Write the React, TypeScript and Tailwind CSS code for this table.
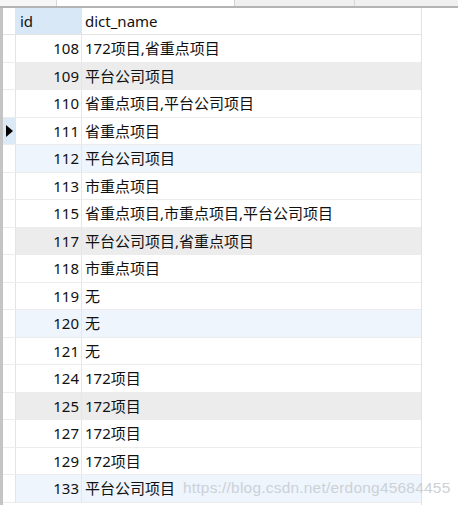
import React from "react";

type Row = { id: number; name: string; bg: "w" | "g" | "b"; current?: boolean };

const rows: Row[] = [
  { id: 108, name: "172项目,省重点项目", bg: "w" },
  { id: 109, name: "平台公司项目", bg: "g" },
  { id: 110, name: "省重点项目,平台公司项目", bg: "w" },
  { id: 111, name: "省重点项目", bg: "w", current: true },
  { id: 112, name: "平台公司项目", bg: "b" },
  { id: 113, name: "市重点项目", bg: "w" },
  { id: 115, name: "省重点项目,市重点项目,平台公司项目", bg: "w" },
  { id: 117, name: "平台公司项目,省重点项目", bg: "g" },
  { id: 118, name: "市重点项目", bg: "w" },
  { id: 119, name: "无", bg: "w" },
  { id: 120, name: "无", bg: "b" },
  { id: 121, name: "无", bg: "w" },
  { id: 124, name: "172项目", bg: "w" },
  { id: 125, name: "172项目", bg: "g" },
  { id: 127, name: "172项目", bg: "w" },
  { id: 129, name: "172项目", bg: "w" },
  { id: 133, name: "平台公司项目", bg: "b" },
];

const rowBg = {
  w: "bg-white",
  g: "bg-[#ececec]",
  b: "bg-[#eef5fd]",
};

export default function App() {
  return (
    <div className="relative w-[458px] h-[505px] overflow-hidden bg-white text-[#111] text-[15px] font-['Segoe_UI','Noto_Sans','Noto_Sans_CJK_SC',sans-serif]">
      {/* tab strip */}
      <div className="flex h-[8px] bg-[#f0f0f0] border-b-2 border-[#b4b4b4]">
        <div className="w-[57px] bg-[#f7f7f7] border-r border-[#d8d8d8]" />
        <div className="w-[178px] bg-white border-r border-[#d0d0d0]" />
        <div className="w-[120px] border-r border-[#d8d8d8]" />
        <div className="flex-1" />
      </div>

      <div className="flex">
        <div className="w-[3px] bg-[#c4c4c4] h-[500px]" />
        <div className="w-[419px] border-r border-[#e2e2e2]">
          {/* header */}
          <div className="flex h-[27px] border-b border-[#e4e4e4]">
            <div className="w-[13px] bg-white border-r border-[#e4e4e4]" />
            <div className="w-[66px] bg-[#d9e8f7] border-r border-[#e4e4e4] pl-[4px] leading-[26px]">
              id
            </div>
            <div className="flex-1 pl-[3px] leading-[26px]">dict_name</div>
          </div>

          {rows.map((r) => (
            <div
              key={r.id}
              className={`flex h-[27.5px] border-b border-[#ececec] ${rowBg[r.bg]}`}
            >
              <div
                className={`w-[13px] flex items-center justify-center border-r border-[#e4e4e4] ${
                  r.current ? "bg-[#dce9f7]" : "bg-white"
                }`}
              >
                {r.current && (
                  <svg width="7" height="12" viewBox="0 0 7 12">
                    <path d="M0 0 L7 6 L0 12 Z" fill="#000" />
                  </svg>
                )}
              </div>
              <div className="w-[66px] text-right pr-[2px] border-r border-[#e6e6e6] leading-[27px]">
                {r.id}
              </div>
              <div className="flex-1 pl-[3px] leading-[27px] whitespace-nowrap">
                {r.name}
              </div>
            </div>
          ))}
        </div>
        <div className="flex-1" />
      </div>

      <div className="absolute left-[183px] top-[476px] text-[15.5px] text-[#cdd1d6] font-['Liberation_Sans',sans-serif] tracking-[0.2px] whitespace-nowrap">
        https://blog.csdn.net/erdong45684455
      </div>
    </div>
  );
}
